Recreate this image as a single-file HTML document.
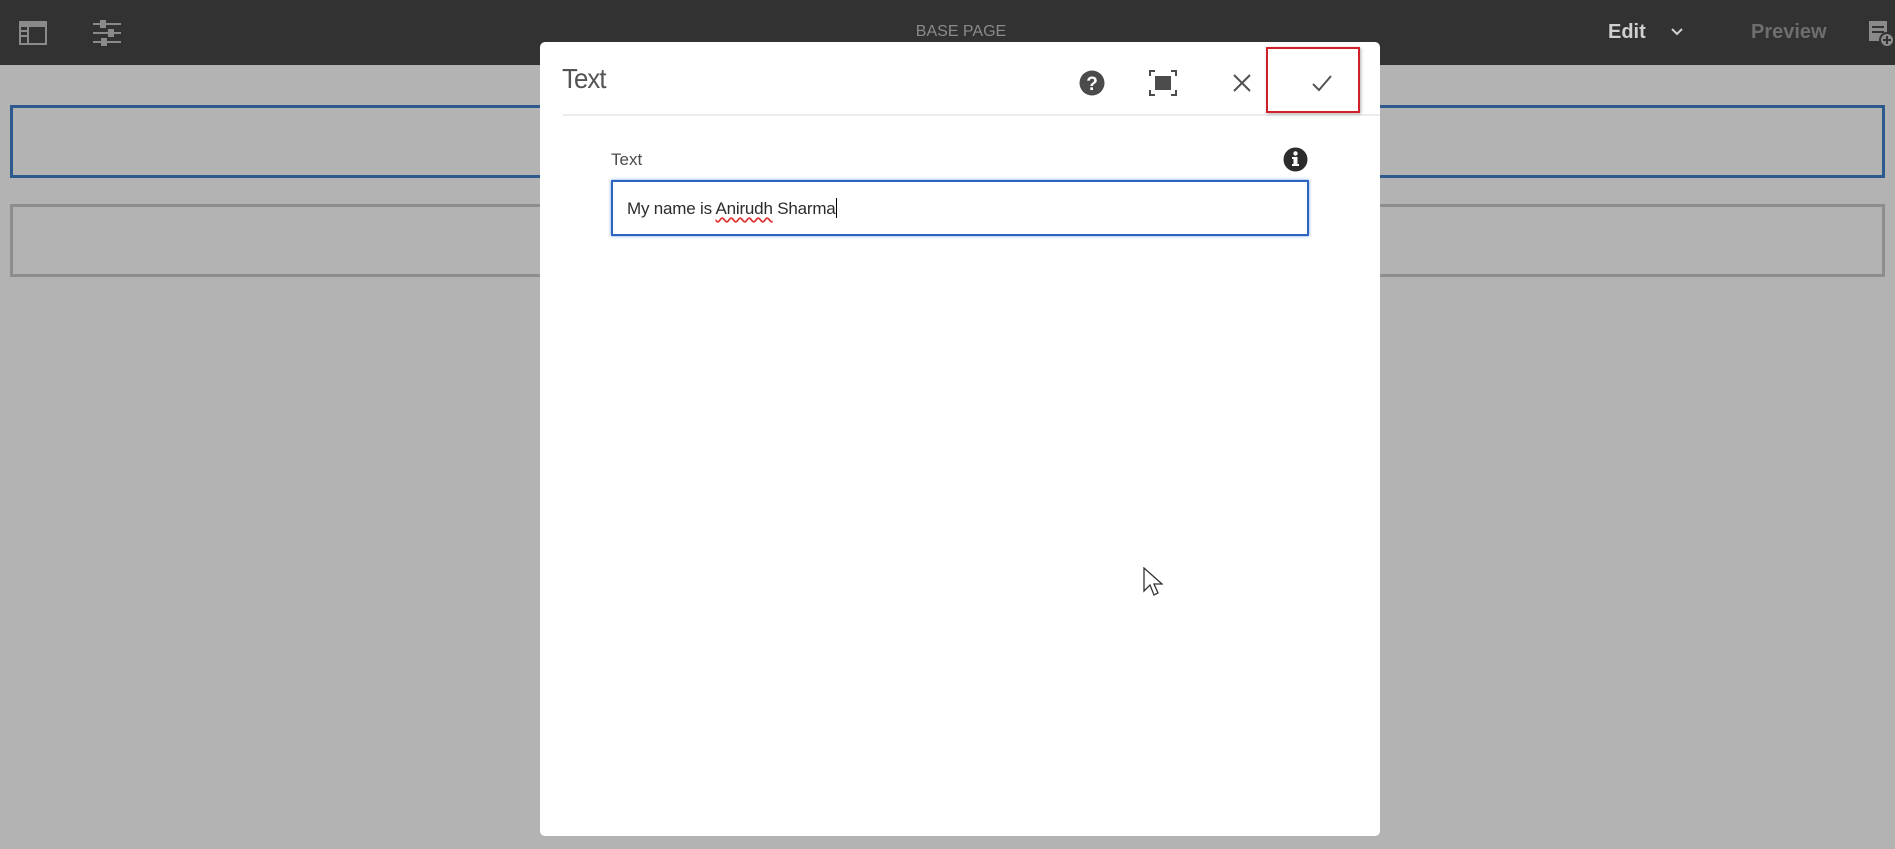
<!DOCTYPE html>
<html><head><meta charset="utf-8"><style>
*{margin:0;padding:0;box-sizing:border-box}
body{width:1895px;height:849px;background:#b3b3b3;position:relative;overflow:hidden;font-family:"Liberation Sans",sans-serif}
.top{position:absolute;left:0;top:0;width:1895px;height:65px;background:#323232}
.abs{position:absolute}
</style></head><body>
<div class="top"></div>
<svg class="abs" style="left:19px;top:21px" width="28" height="24" viewBox="0 0 28 24"><rect x="1" y="1" width="26" height="22" fill="none" stroke="#8a8a8a" stroke-width="2"/><rect x="1" y="1" width="26" height="5" fill="#8a8a8a"/><line x1="9" y1="6" x2="9" y2="23" stroke="#8a8a8a" stroke-width="2"/><rect x="2" y="9" width="6" height="2" fill="#8a8a8a"/><rect x="2" y="14" width="6" height="2" fill="#8a8a8a"/></svg>
<svg class="abs" style="left:93px;top:20px" width="28" height="26" viewBox="0 0 28 26" stroke="#8a8a8a" stroke-width="2" fill="#8a8a8a"><line x1="0" y1="4" x2="28" y2="4"/><line x1="0" y1="13" x2="28" y2="13"/><line x1="0" y1="22" x2="28" y2="22"/><rect x="8" y="1" width="4" height="6"/><rect x="16" y="10" width="4" height="6"/><rect x="9" y="19" width="4" height="6"/></svg>
<div class="abs" style="left:861px;top:23px;width:200px;text-align:center;color:#8a8a8a;font-size:16px">BASE PAGE</div>
<div class="abs" style="left:1608px;top:21px;color:#d0d0d0;font-size:20px;font-weight:bold">Edit</div>
<svg class="abs" style="left:1670px;top:27px" width="14" height="10" viewBox="0 0 14 10"><path d="M2 2l5 5 5-5" fill="none" stroke="#d0d0d0" stroke-width="2"/></svg>
<div class="abs" style="left:1751px;top:21px;color:#6e6e6e;font-size:20px;font-weight:bold">Preview</div>
<svg class="abs" style="left:1868px;top:20px" width="27" height="28" viewBox="0 0 27 28"><rect x="1" y="1" width="18" height="20" fill="#8a8a8a"/><line x1="4" y1="7" x2="16" y2="7" stroke="#323232" stroke-width="2"/><line x1="4" y1="12" x2="16" y2="12" stroke="#323232" stroke-width="2"/><circle cx="19" cy="20" r="7" fill="#8a8a8a" stroke="#323232" stroke-width="2"/><path d="M19 16v8M15 20h8" stroke="#323232" stroke-width="2"/></svg>
<div class="abs" style="left:10px;top:105px;width:1875px;height:73px;border:3px solid #2d5a8e"></div>
<div class="abs" style="left:10px;top:204px;width:1875px;height:73px;border:3px solid #8d8d8d"></div>
<div class="abs" style="left:540px;top:42px;width:840px;height:794px;background:#fff;border-radius:5px"></div>
<div class="abs" style="left:562px;top:63px;font-size:28px;color:#555;font-weight:300;letter-spacing:-1px;transform:scaleX(0.92);transform-origin:left">Text</div>
<div class="abs" style="left:563px;top:114px;width:817px;height:2px;background:#ececec"></div>
<svg class="abs" style="left:1079px;top:70px" width="26" height="26" viewBox="0 0 26 26"><circle cx="13" cy="13" r="12.5" fill="#4b4b4b"/><text x="13" y="20" text-anchor="middle" font-family="Liberation Sans" font-weight="bold" font-size="19" fill="#fff">?</text></svg>
<svg class="abs" style="left:1149px;top:70px" width="28" height="26" viewBox="0 0 28 26" fill="none" stroke="#4b4b4b" stroke-width="2"><path d="M1 6V1h5M22 1h5v5M27 20v5h-5M6 25H1v-5"/><rect x="6" y="6" width="16" height="14" fill="#4b4b4b" stroke="none"/></svg>
<svg class="abs" style="left:1233px;top:74px" width="18" height="18" viewBox="0 0 18 18"><path d="M1 1l16 16M17 1L1 17" stroke="#505050" stroke-width="2"/></svg>
<div class="abs" style="left:1266px;top:47px;width:94px;height:66px;border:2px solid #d0202a;box-shadow:1px 1px 3px rgba(0,0,0,.3)"></div>
<svg class="abs" style="left:1311px;top:74px" width="22" height="18" viewBox="0 0 22 18"><path d="M2 10l6 6L20 2" fill="none" stroke="#555" stroke-width="2"/></svg>
<div class="abs" style="left:611px;top:150px;font-size:17px;color:#4b4b4b">Text</div>
<svg class="abs" style="left:1283px;top:147px" width="25" height="25" viewBox="0 0 25 25"><circle cx="12.5" cy="12.5" r="12" fill="#2c2c2c"/><rect x="10.5" y="10" width="4" height="9" fill="#fff"/><rect x="9" y="10" width="5" height="2" fill="#fff"/><rect x="9" y="17" width="7" height="2" fill="#fff"/><circle cx="12.5" cy="6.5" r="2.2" fill="#fff"/></svg>
<div class="abs" style="left:611px;top:180px;width:698px;height:56px;border:2px solid #2b65bd;box-shadow:0 0 3px #6fa0e8;background:#fff"></div>
<div class="abs" style="left:627px;top:198px;font-size:17px;color:#2c2c2c;letter-spacing:-0.2px">My name is <span style="text-decoration:underline wavy #e03030;text-underline-offset:3px">Anirudh</span> Sharma<span style="display:inline-block;width:1px;height:20px;background:#000;vertical-align:-4px"></span></div>
<svg class="abs" style="left:1143px;top:567px" width="20" height="30" viewBox="0 0 20 30"><path d="M1 1v23l6-6 4 10 4-2-4-9h8z" fill="#fff" stroke="#333" stroke-width="1.3"/></svg>
</body></html>
